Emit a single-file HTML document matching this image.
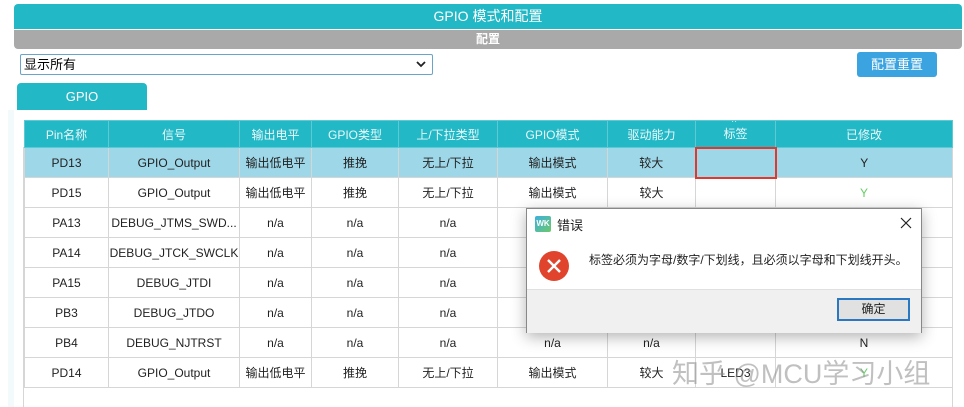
<!DOCTYPE html>
<html><head><meta charset="utf-8"><style>
*{margin:0;padding:0;box-sizing:border-box}
body{width:964px;height:407px;background:#fff;position:relative;overflow:hidden;font-family:"Liberation Sans","Noto Sans CJK SC",sans-serif;font-size:12px;color:#222}
.abs{position:absolute}
.top{left:14px;top:4px;width:948px;height:25px;background:#23b8c6;color:#fff;text-align:center;line-height:25px;font-size:14px;border-radius:4px 4px 0 0}
.gray{left:14px;top:30px;width:948px;height:19px;background:#a9a9a9;color:#fff;text-align:center;line-height:19px;font-weight:bold;font-size:12px;border-radius:0 0 4px 4px}
.sel{left:20px;top:54px;width:413px;height:21px;border:1px solid #6aa4c8;border-radius:2px;line-height:19px;padding-left:3px;font-size:13px;color:#000}
.btn{left:857px;top:52px;width:80px;height:25px;background:#3ba4e0;color:#fff;text-align:center;line-height:25px;font-size:13px;border-radius:3px}
.tab{left:17px;top:83px;width:130px;height:27px;background:#23b8c6;color:#fff;text-align:center;line-height:27px;font-size:13px;border-radius:4px 4px 0 0}
.strip{left:8px;top:110px;width:6px;height:297px;background:#f2fafb}
table{position:absolute;left:24px;top:120px;border-collapse:collapse;table-layout:fixed}
td{border:1px solid #d6d6d6;height:30px;text-align:center;font-size:12px;white-space:nowrap;overflow:hidden}
tr.h td{background:#23b8c6;color:#e8f8fa;height:27px;border-color:#5cc9d4}
tr.sel1 td{background:#9ed7e8}
.dlg{left:526px;top:208px;width:396px;height:125px;background:#fff;border:1px solid #888;box-shadow:0 4px 14px rgba(0,0,0,.3)}
</style></head><body>
<div class="abs top">GPIO 模式和配置</div>
<div class="abs gray">配置</div>
<div class="abs sel">显示所有<svg style="position:absolute;right:6px;top:6px" width="10" height="7" viewBox="0 0 10 7"><path d="M1 1 L5 5 L9 1" fill="none" stroke="#222" stroke-width="1.8"/></svg></div>
<div class="abs btn">配置重置</div>
<div class="abs tab">GPIO</div>
<div class="abs strip"></div>
<div class="abs" style="left:23px;top:147px;width:1px;height:260px;background:#d6d6d6"></div>
<div class="abs" style="left:952px;top:147px;width:1px;height:260px;background:#d6d6d6"></div>
<table>
<colgroup><col style="width:84px"><col style="width:131px"><col style="width:72px"><col style="width:87px"><col style="width:99px"><col style="width:110px"><col style="width:88px"><col style="width:80px"><col style="width:177px"></colgroup>
<tr class="h"><td>Pin名称</td><td>信号</td><td>输出电平</td><td>GPIO类型</td><td>上/下拉类型</td><td>GPIO模式</td><td>驱动能力</td><td style="position:relative">标签<span style="position:absolute;left:36px;top:-4px;font-size:9px">^</span></td><td>已修改</td></tr>
<tr class="sel1"><td>PD13</td><td>GPIO_Output</td><td>输出低电平</td><td>推挽</td><td>无上/下拉</td><td>输出模式</td><td>较大</td><td style="border:2px solid #e0382c;border-radius:3px"></td><td>Y</td></tr>
<tr><td>PD15</td><td>GPIO_Output</td><td>输出低电平</td><td>推挽</td><td>无上/下拉</td><td>输出模式</td><td>较大</td><td></td><td style="color:#6c6">Y</td></tr>
<tr><td>PA13</td><td>DEBUG_JTMS_SWD...</td><td>n/a</td><td>n/a</td><td>n/a</td><td></td><td></td><td></td><td></td></tr>
<tr><td>PA14</td><td>DEBUG_JTCK_SWCLK</td><td>n/a</td><td>n/a</td><td>n/a</td><td></td><td></td><td></td><td></td></tr>
<tr><td>PA15</td><td>DEBUG_JTDI</td><td>n/a</td><td>n/a</td><td>n/a</td><td></td><td></td><td></td><td></td></tr>
<tr><td>PB3</td><td>DEBUG_JTDO</td><td>n/a</td><td>n/a</td><td>n/a</td><td></td><td></td><td></td><td></td></tr>
<tr><td>PB4</td><td>DEBUG_NJTRST</td><td>n/a</td><td>n/a</td><td>n/a</td><td>n/a</td><td>n/a</td><td></td><td>N</td></tr>
<tr><td>PD14</td><td>GPIO_Output</td><td>输出低电平</td><td>推挽</td><td>无上/下拉</td><td>输出模式</td><td>较大</td><td>LED3</td><td style="color:#6c6">Y</td></tr>
</table>
<div class="abs" style="left:672px;top:352px;font-size:27px;color:rgba(140,140,140,.55);white-space:nowrap">知乎 @MCU学习小组</div>
<div class="abs dlg">
 <div class="abs" style="left:8px;top:7px;width:16px;height:16px;background:linear-gradient(135deg,#3cb0e0,#6cc86c);border-radius:2px;color:#fff;font-size:8px;font-weight:bold;line-height:16px;text-align:center">WK</div>
 <div class="abs" style="left:30px;top:6px;font-size:13px">错误</div>
 <svg class="abs" style="left:373px;top:8px" width="12" height="12" viewBox="0 0 12 12"><path d="M1 1 L11 11 M11 1 L1 11" stroke="#222" stroke-width="1.2"/></svg>
 <div class="abs" style="left:12px;top:42px;width:30px;height:30px;border-radius:50%;background:#e0442c"><svg width="30" height="30" viewBox="0 0 30 30"><path d="M9 9 L21 21 M21 9 L9 21" stroke="#fff" stroke-width="2.4"/></svg></div>
 <div class="abs" style="left:62px;top:42px;font-size:12px">标签必须为字母/数字/下划线，且必须以字母和下划线开头。</div>
 <div class="abs" style="left:0;top:80px;width:394px;height:44px;background:#f0f0f0;border-top:1px solid #e0e0e0"></div>
 <div class="abs" style="left:310px;top:89px;width:73px;height:23px;background:#e1e1e1;border:2px solid #2b78c2;text-align:center;line-height:19px;font-size:12px">确定</div>
</div>
</body></html>
